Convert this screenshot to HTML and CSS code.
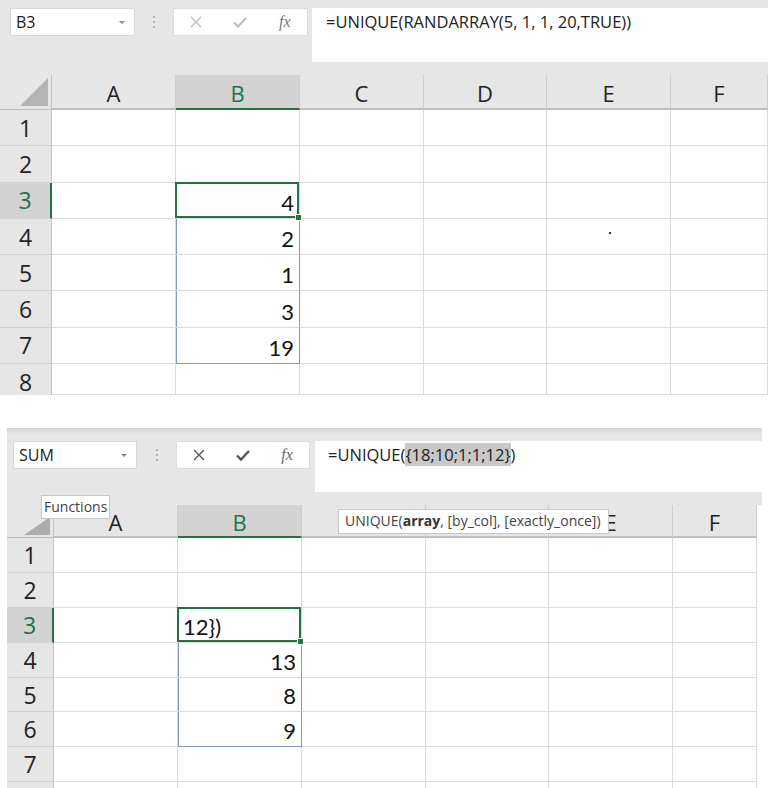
FILE: index.html
```html
<!DOCTYPE html>
<html lang="en">
<head>
  <meta charset="UTF-8">
  <title>UNIQUE function in Excel</title>
  <link rel="stylesheet" href="styles.css">
</head>
<body>

  <!-- first capture: result of the spilled formula -->
  <div class="sheet sheet-top">
    <div class="toolbar">
      <div class="namebox"><span>B3</span><span class="caret"></span></div>
      <div class="grip"><i></i><i></i><i></i></div>
      <div class="fbtns muted">
        <svg width="12" height="12" viewBox="0 0 12 12"><path d="M1 1L11 11M11 1L1 11" stroke="currentColor" stroke-width="1.3" fill="none"/></svg>
        <svg width="14" height="11" viewBox="0 0 14 11"><path d="M1 5.5L5 9.5L13 1" stroke="currentColor" stroke-width="2.2" fill="none"/></svg>
        <span class="fx">fx</span>
      </div>
      <div class="formula">=UNIQUE(RANDARRAY(5, 1, 1, 20,TRUE))</div>
    </div>

    <div class="grid">
      <div class="corner"></div><div class="ch">A</div><div class="ch on">B</div><div class="ch">C</div><div class="ch">D</div><div class="ch">E</div><div class="ch">F</div>
      <div class="rh">1</div><div class="c"></div><div class="c"></div><div class="c"></div><div class="c"></div><div class="c"></div><div class="c"></div>
      <div class="rh">2</div><div class="c"></div><div class="c"></div><div class="c"></div><div class="c"></div><div class="c"></div><div class="c"></div>
      <div class="rh on">3</div><div class="c"></div><div class="c active">4</div><div class="c"></div><div class="c"></div><div class="c"></div><div class="c"></div>
      <div class="rh">4</div><div class="c"></div><div class="c rng">2</div><div class="c"></div><div class="c"></div><div class="c"><span class="dot"></span></div><div class="c"></div>
      <div class="rh">5</div><div class="c"></div><div class="c rng">1</div><div class="c"></div><div class="c"></div><div class="c"></div><div class="c"></div>
      <div class="rh">6</div><div class="c"></div><div class="c rng">3</div><div class="c"></div><div class="c"></div><div class="c"></div><div class="c"></div>
      <div class="rh">7</div><div class="c"></div><div class="c rng last">19</div><div class="c"></div><div class="c"></div><div class="c"></div><div class="c"></div>
      <div class="rh cut">8</div><div class="c"></div><div class="c"></div><div class="c"></div><div class="c"></div><div class="c"></div><div class="c"></div>
    </div>
  </div>

  <!-- second capture: editing the formula -->
  <div class="sheet sheet-bottom">
    <div class="toolbar">
      <div class="namebox"><span>SUM</span><span class="caret"></span></div>
      <div class="grip"><i></i><i></i><i></i></div>
      <div class="fbtns">
        <svg width="12" height="12" viewBox="0 0 12 12"><path d="M1 1L11 11M11 1L1 11" stroke="currentColor" stroke-width="1.4" fill="none"/></svg>
        <svg width="14" height="11" viewBox="0 0 14 11"><path d="M1 5.5L5 9.5L13 1" stroke="currentColor" stroke-width="2.4" fill="none"/></svg>
        <span class="fx">fx</span>
      </div>
      <div class="formula">=UNIQUE(<span class="hl">{18;10;1;1;12}</span>)</div>
    </div>

    <div class="grid">
      <div class="corner"></div><div class="ch">A</div><div class="ch on">B</div><div class="ch">C</div><div class="ch">D</div><div class="ch">E</div><div class="ch">F</div>
      <div class="rh">1</div><div class="c"></div><div class="c"></div><div class="c"></div><div class="c"></div><div class="c"></div><div class="c"></div>
      <div class="rh">2</div><div class="c"></div><div class="c"></div><div class="c"></div><div class="c"></div><div class="c"></div><div class="c"></div>
      <div class="rh on">3</div><div class="c"></div><div class="c active left">12})</div><div class="c"></div><div class="c"></div><div class="c"></div><div class="c"></div>
      <div class="rh">4</div><div class="c"></div><div class="c rng">13</div><div class="c"></div><div class="c"></div><div class="c"></div><div class="c"></div>
      <div class="rh">5</div><div class="c"></div><div class="c rng">8</div><div class="c"></div><div class="c"></div><div class="c"></div><div class="c"></div>
      <div class="rh">6</div><div class="c"></div><div class="c rng last">9</div><div class="c"></div><div class="c"></div><div class="c"></div><div class="c"></div>
      <div class="rh">7</div><div class="c"></div><div class="c"></div><div class="c"></div><div class="c"></div><div class="c"></div><div class="c"></div>
      <div class="rh"></div><div class="c"></div><div class="c"></div><div class="c"></div><div class="c"></div><div class="c"></div><div class="c"></div>
    </div>

    <div class="tip tip-functions">Functions</div>
    <div class="tip tip-args">UNIQUE(<b>array</b>, [by_col], [exactly_once])</div>
  </div>

</body>
</html>
```

FILE: styles.css
```css
body {
  margin: 0;
  width: 768px;
  height: 788px;
  overflow: hidden;
  background: #fff;
  font-family: 'Open Sans', 'Noto Sans', sans-serif;
  color: #222;
}

.sheet {
  position: relative;
  overflow: hidden;
}

.sheet-top {
  height: 395px;
}

.sheet-bottom {
  margin: 33px 6px 0 7px;
  height: 362px;
}

/* formula bar */
.toolbar {
  display: flex;
  align-items: flex-start;
  background: #e6e6e6;
  box-sizing: border-box;
}

.sheet-top .toolbar {
  height: 75px;
  padding: 8px 0 0 10px;
}

.sheet-bottom .toolbar {
  height: 77px;
  padding: 13px 0 0 6px;
  background: linear-gradient(#d2d2d2, #e6e6e6 6px);
}

.namebox {
  width: 125px;
  height: 28px;
  box-sizing: border-box;
  background: #fff;
  border: 1px solid #d8d8d8;
  display: flex;
  align-items: center;
  justify-content: space-between;
  padding: 0 9px 0 5px;
  font-size: 16px;
}

.sheet-bottom .namebox {
  width: 124px;
}

.caret {
  width: 0;
  height: 0;
  border-left: 3px solid transparent;
  border-right: 3px solid transparent;
  border-top: 3px solid #888;
}

.grip {
  width: 38px;
  display: flex;
  flex-direction: column;
  align-items: center;
  gap: 3px;
  padding-top: 8px;
}

.sheet-bottom .grip {
  width: 39px;
}

.grip i {
  width: 2px;
  height: 2px;
  background: #b5b5b5;
}

.fbtns {
  width: 135px;
  height: 28px;
  box-sizing: border-box;
  background: #fff;
  border: 1px solid #dcdcdc;
  display: grid;
  grid-template-columns: repeat(3, 1fr);
  align-items: center;
  justify-items: center;
  color: #555;
}

.sheet-bottom .fbtns {
  width: 134px;
}

.fbtns.muted {
  color: #bcbcbc;
}

.fx {
  font-family: 'Liberation Serif', serif;
  font-style: italic;
  font-size: 16px;
  color: #666;
}

.muted .fx {
  color: #777;
}

.formula {
  flex: 1;
  height: 54px;
  margin-left: 4px;
  box-sizing: border-box;
  background: #fff;
  padding: 2px 0 0 14px;
  font-size: 16.5px;
  color: #222;
}

.sheet-bottom .formula {
  height: 51px;
  margin-left: 5px;
  padding-left: 13px;
  padding-top: 2px;
}

.hl {
  background: #c8c8c8;
}

/* spreadsheet grid */
.grid {
  display: grid;
}

.sheet-top .grid {
  grid-template-columns: 52px 124px 124px 124px 123px 124px 1fr;
  grid-template-rows: 35px repeat(7, 36.3px) 31px;
}

.sheet-bottom .grid {
  grid-template-columns: 47px 124px 124px 124px 123px 124px 84px;
  grid-template-rows: 33px repeat(8, 34.9px);
}

.corner {
  background: #e6e6e6;
  border-right: 1px solid #c4c4c4;
  border-bottom: 1px solid #bdbdbd;
  position: relative;
}

.corner::after {
  content: "";
  position: absolute;
  right: 3px;
  bottom: 3px;
  border-left: 28px solid transparent;
  border-bottom: 28px solid #b5b5b5;
}

.sheet-bottom .corner::after {
  border-left-width: 26px;
  border-bottom-width: 18px;
  bottom: 2px;
  border-bottom-color: #adadad;
}

.ch {
  background: #e6e6e6;
  border-right: 1px solid #cdcdcd;
  border-bottom: 2px solid #c0c0c0;
  box-sizing: border-box;
  display: flex;
  align-items: center;
  justify-content: center;
  padding-top: 3px;
  font-size: 22px;
  color: #222;
}

.ch.on {
  background: #d3d3d3;
  color: #217346;
  border-bottom-color: #217346;
}

.rh {
  background: #e6e6e6;
  border-right: 1px solid #c4c4c4;
  border-bottom: 1px solid #d2d2d2;
  box-sizing: border-box;
  display: flex;
  align-items: center;
  justify-content: center;
  font-size: 23px;
  color: #222;
}

.rh.cut {
  align-items: flex-start;
  padding-top: 6px;
  line-height: 24px;
  border-bottom: none;
}

.rh.on {
  background: #d3d3d3;
  color: #217346;
  border-right: 2px solid #217346;
}

.c {
  position: relative;
  border-right: 1px solid #dadada;
  border-bottom: 1px solid #dadada;
  box-sizing: border-box;
  display: flex;
  align-items: flex-end;
  justify-content: flex-end;
  padding: 0 5px 2px;
  font-family: Lato, 'Open Sans', sans-serif;
  font-size: 22px;
  color: #111;
}

.c.left {
  justify-content: flex-start;
}

.c.rng {
  border-right-color: #8497c4;
  box-shadow: inset 1px 0 #8497c4;
}

.c.rng.last {
  border-bottom-color: #8497c4;
}

.c.active {
  z-index: 1;
}

.c.active::after {
  content: "";
  position: absolute;
  top: -1px;
  left: -1px;
  right: 0;
  bottom: 0;
  border: 2px solid #217346;
}

.c.active::before {
  content: "";
  position: absolute;
  right: -3px;
  bottom: -3px;
  width: 5px;
  height: 5px;
  background: #217346;
  border: 1px solid #fff;
  z-index: 2;
}

.dot {
  position: absolute;
  left: 62px;
  top: 13px;
  width: 2px;
  height: 2px;
  background: #2c2c8a;
}

/* hover tips */
.tip {
  position: absolute;
  background: #fff;
  border: 1px solid #c8c8c8;
  font-size: 14px;
  color: #444;
  white-space: nowrap;
  box-sizing: border-box;
}

.tip-functions {
  left: 34px;
  top: 67px;
  height: 24px;
  padding: 1px 2px 0;
}

.tip-args {
  left: 331px;
  top: 81px;
  width: 271px;
  height: 25px;
  padding: 1px 0 0 6px;
}

.tip-args b {
  color: #333;
}
```
